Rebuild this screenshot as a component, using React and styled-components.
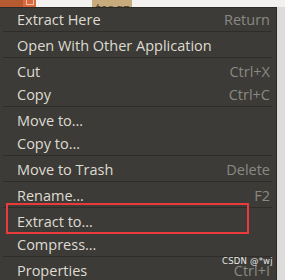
import React from "react";
import styled, { createGlobalStyle } from "styled-components";

const Global = createGlobalStyle`
  html, body { margin: 0; padding: 0; background: #dddcda; }
  body { width: 285px; height: 280px; overflow: hidden; font-family: "Open Sans", "DejaVu Sans", sans-serif; }
`;

const Page = styled.div`
  position: relative;
  width: 285px;
  height: 280px;
  overflow: hidden;
  display: flex;
  flex-direction: column;
`;

const Desktop = styled.div`
  height: 7px;
  flex-shrink: 0;
  display: flex;
  background: #f2f1f0;
  overflow: hidden;
`;

const OrangeTab = styled.div`
  width: ${(p) => p.$w}px;
  background: ${(p) => p.$bg};
  display: flex;
  justify-content: center;
`;

const LockGlyph = styled.div`
  width: 6px;
  height: 4px;
  border: 1.5px solid #f7c3a8;
  border-top: none;
  border-radius: 0 0 1px 1px;
`;

const Gap = styled.div`
  width: ${(p) => p.$w}px;
`;

const FileLabel = styled.div`
  width: 40px;
  background: #c8ab7d;
  color: #5a4a33;
  font-family: "DejaVu Sans", sans-serif;
  font-style: italic;
  font-size: 12px;
  line-height: 12px;
  text-align: center;
  padding-top: 3px;
`;

const Menu = styled.div`
  width: 277px;
  flex: 1;
  background: #3c3b37;
  border-top: 1px solid #2b2a27;
  border-right: 1px solid #2b2a27;
  box-sizing: border-box;
  display: flex;
  flex-direction: column;
`;

const Item = styled.div`
  height: 23px;
  box-sizing: border-box;
  padding: 0 6px 0 17px;
  flex-shrink: 0;
  display: flex;
  align-items: center;
  justify-content: space-between;
  font-size: 14.5px;
  line-height: 20px;
  color: #dfdbd2;
`;

const Shortcut = styled.span`
  color: #8a8983;
`;

const Separator = styled.div`
  height: 1px;
  flex-shrink: 0;
  margin: 0 4px 2px 3px;
  background: #2e2d2a;
`;

const Highlight = styled.div`
  position: absolute;
  left: 6px;
  top: 203px;
  width: 243px;
  height: 31px;
  border: 2px solid #ea3a3a;
  box-sizing: border-box;
`;

const Watermark = styled.div`
  position: absolute;
  left: 222px;
  top: 256px;
  font-family: "DejaVu Sans", sans-serif;
  font-size: 8.5px;
  color: #e8e8e8;
  letter-spacing: 0.2px;
`;

const rows = [
  ["Extract Here", "Return"],
  "sep",
  ["Open With Other Application"],
  "sep",
  ["Cut", "Ctrl+X"],
  ["Copy", "Ctrl+C"],
  "sep",
  ["Move to…"],
  ["Copy to…"],
  "sep",
  ["Move to Trash", "Delete"],
  "sep",
  ["Rename…", "F2"],
  "sep",
  ["Extract to…"],
  ["Compress…"],
  "sep",
  ["Properties", "Ctrl+I"],
];

export default function App() {
  return (
    <>
      <Global />
      <Page>
        <Desktop>
          <OrangeTab $w={23} $bg="#b65a32" />
          <OrangeTab $w={13} $bg="#d9693c">
            <LockGlyph />
          </OrangeTab>
          <Gap $w={56} />
          <FileLabel>tar.gz</FileLabel>
        </Desktop>
        <Menu>
          {rows.map((r, i) =>
            r === "sep" ? (
              <Separator key={i} />
            ) : (
              <Item key={i}>
                <span>{r[0]}</span>
                {r[1] && <Shortcut>{r[1]}</Shortcut>}
              </Item>
            )
          )}
        </Menu>
        <Highlight />
        <Watermark>CSDN @*wj</Watermark>
      </Page>
    </>
  );
}
